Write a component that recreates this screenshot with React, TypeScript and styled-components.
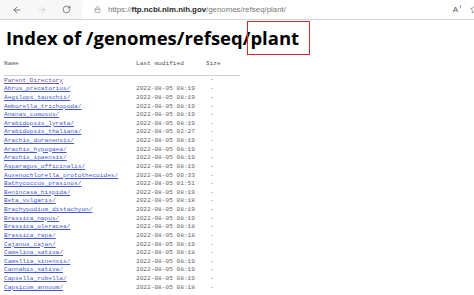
import React from 'react'
import styled, { createGlobalStyle } from 'styled-components'
import { ArrowLeft, ArrowRight, RotateCw, Lock, Star } from 'lucide-react'

const GlobalStyle = createGlobalStyle`
  html, body {
    margin: 0;
    padding: 0;
    background: #ffffff;
    overflow: hidden;
  }
`

const Window = styled.div`
  width: 474px;
  height: 295px;
  overflow: hidden;
  background: #ffffff;
`

const Toolbar = styled.div`
  display: flex;
  align-items: center;
  height: 19px;
  background: #f7f7f7;
  border-bottom: 1px solid #d4d4d4;
`

const NavButton = styled.div<{ $muted?: boolean }>`
  width: 25px;
  display: flex;
  justify-content: center;
  align-items: center;
  color: ${(p) => (p.$muted ? '#c4c4c4' : '#3a3a3a')};
  &:first-child {
    margin-left: 4px;
  }
`

const AddressBar = styled.div`
  flex: 1;
  height: 19px;
  margin-left: 3px;
  display: flex;
  align-items: center;
  background: #ffffff;
  border-top-left-radius: 4px;
  padding-left: 12px;
  overflow: hidden;
`

const LockIcon = styled.span`
  display: flex;
  color: #6d6d6d;
  margin-right: 7px;
`

const Url = styled.span`
  font-family: 'Liberation Sans', Arial, sans-serif;
  font-size: 7.85px;
  color: #777777;
  white-space: nowrap;
`

const Host = styled.span`
  color: #1f1f1f;
  font-weight: bold;
`

const ToolIcons = styled.div`
  margin-left: auto;
  display: flex;
  align-items: center;
  gap: 9px;
  margin-right: -5px;
  color: #555555;
`

const ReadAloud = styled.span`
  font-family: 'Liberation Sans', Arial, sans-serif;
  font-size: 8px;
  color: #555555;
  position: relative;
  padding-right: 3px;
  &::after {
    content: '';
    position: absolute;
    right: 0;
    top: 0;
    width: 2px;
    height: 3px;
    border-right: 1px solid #777;
    border-radius: 0 3px 3px 0;
  }
`

const Page = styled.div`
  padding: 0 4px;
`

const Heading = styled.h1`
  margin: 9px 0 0 2px;
  font-family: 'Open Sans', 'Liberation Sans', sans-serif;
  font-weight: 700;
  font-size: 18.5px;
  line-height: 18px;
  color: #000000;
  white-space: nowrap;
`

const Marked = styled.span`
  position: relative;
  &::after {
    content: '';
    position: absolute;
    left: -3px;
    right: -11px;
    top: -4px;
    bottom: -5px;
    border: 1.5px solid #e0242a;
  }
`

const Listing = styled.div`
  margin-top: 13px;
  width: 236px;
  font-family: 'Liberation Mono', 'Courier New', monospace;
  font-size: 6.15px;
  line-height: 8.63px;
  color: #666666;
`

const Row = styled.div`
  display: grid;
  grid-template-columns: 132px 70px 1fr;
  white-space: nowrap;
`

const HeadRow = styled(Row)`
  color: #555555;
`

const Rule = styled.div`
  height: 1px;
  background: #cfcfcf;
  margin: 6px 0 1px;
`

const Link = styled.a<{ $visited?: boolean }>`
  color: ${(p) => (p.$visited ? '#6a50b4' : '#4257d4')};
  text-decoration: underline;
`

const Size = styled.span<{ $raised?: boolean }>`
  padding-left: 4px;
  position: relative;
  top: ${(p) => (p.$raised ? '-1px' : '0')};
`

const entries: [string, string][] = [
  ['Abrus_precatorius/', '08:19'],
  ['Aegilops_tauschii/', '08:19'],
  ['Amborella_trichopoda/', '08:19'],
  ['Ananas_comosus/', '08:19'],
  ['Arabidopsis_lyrata/', '08:19'],
  ['Arabidopsis_thaliana/', '02:27'],
  ['Arachis_duranensis/', '08:19'],
  ['Arachis_hypogaea/', '08:19'],
  ['Arachis_ipaensis/', '08:19'],
  ['Asparagus_officinalis/', '08:19'],
  ['Auxenochlorella_protothecoides/', '00:33'],
  ['Bathycoccus_prasinos/', '01:51'],
  ['Benincasa_hispida/', '08:19'],
  ['Beta_vulgaris/', '08:18'],
  ['Brachypodium_distachyon/', '08:19'],
  ['Brassica_napus/', '08:19'],
  ['Brassica_oleracea/', '08:18'],
  ['Brassica_rapa/', '08:18'],
  ['Cajanus_cajan/', '08:19'],
  ['Camelina_sativa/', '08:18'],
  ['Camellia_sinensis/', '08:19'],
  ['Cannabis_sativa/', '08:19'],
  ['Capsella_rubella/', '08:19'],
  ['Capsicum_annuum/', '08:18'],
]

export default function App() {
  return (
    <Window>
      <GlobalStyle />
      <Toolbar>
        <NavButton>
          <ArrowLeft size={10} strokeWidth={1.6} />
        </NavButton>
        <NavButton $muted>
          <ArrowRight size={10} strokeWidth={1.6} />
        </NavButton>
        <NavButton>
          <RotateCw size={9} strokeWidth={1.6} />
        </NavButton>
        <AddressBar>
          <LockIcon>
            <Lock size={7} strokeWidth={1.8} />
          </LockIcon>
          <Url>
            https://<Host>ftp.ncbi.nlm.nih.gov</Host>/genomes/refseq/plant/
          </Url>
          <ToolIcons>
            <ReadAloud>A</ReadAloud>
            <Star size={9} strokeWidth={1.5} />
          </ToolIcons>
        </AddressBar>
      </Toolbar>
      <Page>
        <Heading>
          Index of /genomes/refseq/<Marked>plant</Marked>
        </Heading>
        <Listing>
          <HeadRow>
            <span>Name</span>
            <span>Last modified</span>
            <span>Size</span>
          </HeadRow>
          <Rule />
          <Row>
            <Link $visited href="#">Parent Directory</Link>
            <span />
            <Size $raised>-</Size>
          </Row>
          {entries.map(([name, time]) => (
            <Row key={name}>
              <span>
                <Link href="#">{name}</Link>
              </span>
              <span>2022-08-05 {time}</span>
              <Size>-</Size>
            </Row>
          ))}
        </Listing>
      </Page>
    </Window>
  )
}
